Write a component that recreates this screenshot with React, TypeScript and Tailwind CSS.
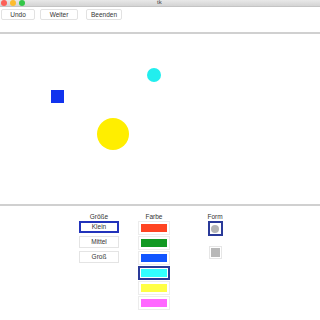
import React from 'react';

const sizes = ['Klein', 'Mittel', 'Groß'];
const colors = ['#ff4422', '#119922', '#1155ff', '#33ffff', '#ffff44', '#ff66ff'];

export default function App() {
  return (
    <div className="w-[320px] h-[320px] bg-white overflow-hidden flex flex-col" style={{ fontFamily: '"Liberation Sans", Arial, sans-serif' }}>
      {/* title bar */}
      <div className="relative h-[7px] bg-gradient-to-b from-[#e8e8e8] to-[#d4d4d4] border-b border-[#c4c4c4] flex items-center gap-[3px] pl-[1px]">
        <span className="w-[6px] h-[6px] rounded-full bg-[#fc5f57]" />
        <span className="w-[6px] h-[6px] rounded-full bg-[#fdbc2e]" />
        <span className="w-[6px] h-[6px] rounded-full bg-[#33c748]" />
        <span className="absolute left-[157px] top-[-1px] text-[6px] leading-[7px] text-[#444]">tk</span>
      </div>
      {/* toolbar */}
      <div className="h-[27px] flex items-start gap-[4px] pt-[2px] pl-[1px] bg-white border-b-[2px] border-[#d0d0d0]">
        <Btn w="w-[34px]">Undo</Btn>
        <Btn w="w-[38px]" className="ml-[1px]">Weiter</Btn>
        <Btn w="w-[36px]" className="ml-[4px]">Beenden</Btn>
      </div>
      {/* canvas */}
      <div className="relative h-[172px] bg-white border-b-[2px] border-[#d0d0d0]">
        <div className="absolute left-[51px] top-[56px] w-[13px] h-[13px] bg-[#1133ee]" />
        <div className="absolute left-[147px] top-[34px] w-[14px] h-[14px] rounded-full bg-[#22eeee]" />
        <div className="absolute left-[97px] top-[84px] w-[32px] h-[32px] rounded-full bg-[#ffee00]" />
      </div>
      {/* controls */}
      <div className="flex-1 flex items-start pl-[79px] pt-[8px] bg-white">
        <div className="w-[40px] flex flex-col items-center">
          <Label>Größe</Label>
          {sizes.map((s, i) => (
            <div
              key={s}
              className={
                i === 0
                  ? 'w-[40px] h-[12px] mb-[3px] border-[2px] border-[#2233bb] bg-white flex items-center justify-center text-[6.5px] text-[#333]'
                  : 'w-[40px] h-[12px] mb-[3px] border border-[#e4e4e4] bg-white flex items-center justify-center text-[6.5px] text-[#333]'
              }
            >
              {s}
            </div>
          ))}
        </div>
        <div className="w-[34px] ml-[18px] flex flex-col items-center">
          <Label>Farbe</Label>
          {colors.map((c, i) => (
            <div
              key={c}
              className={
                i === 3
                  ? 'w-[32px] h-[14px] mb-[1px] border-[2px] border-[#2a3a99] p-[1px] bg-white'
                  : 'w-[32px] h-[14px] mb-[1px] border border-[#ececec] p-[2px] bg-white'
              }
            >
              <div className="w-full h-full" style={{ backgroundColor: c }} />
            </div>
          ))}
        </div>
        <div className="w-[16px] ml-[36px] flex flex-col items-center">
          <Label>Form</Label>
          <div className="w-[15px] h-[15px] border-[2px] border-[#2a3a99] bg-white flex items-center justify-center">
            <span className="w-[8px] h-[8px] rounded-full bg-[#b4b4b4]" />
          </div>
          <div className="mt-[10px] w-[13px] h-[13px] border border-[#e6e6e6] bg-white flex items-center justify-center">
            <span className="w-[9px] h-[9px] bg-[#b8b8b8]" />
          </div>
        </div>
      </div>
    </div>
  );
}

function Btn({ children, w, className = '' }: { children: React.ReactNode; w: string; className?: string }) {
  return (
    <div className={`${w} ${className} h-[11px] border border-[#e2e2e2] rounded-[2px] bg-white flex items-center justify-center text-[6.5px] text-[#333]`}>
      {children}
    </div>
  );
}

function Label({ children }: { children: React.ReactNode }) {
  return <div className="h-[6px] mb-[1px] text-[6.5px] leading-[6px] text-[#333]">{children}</div>;
}
